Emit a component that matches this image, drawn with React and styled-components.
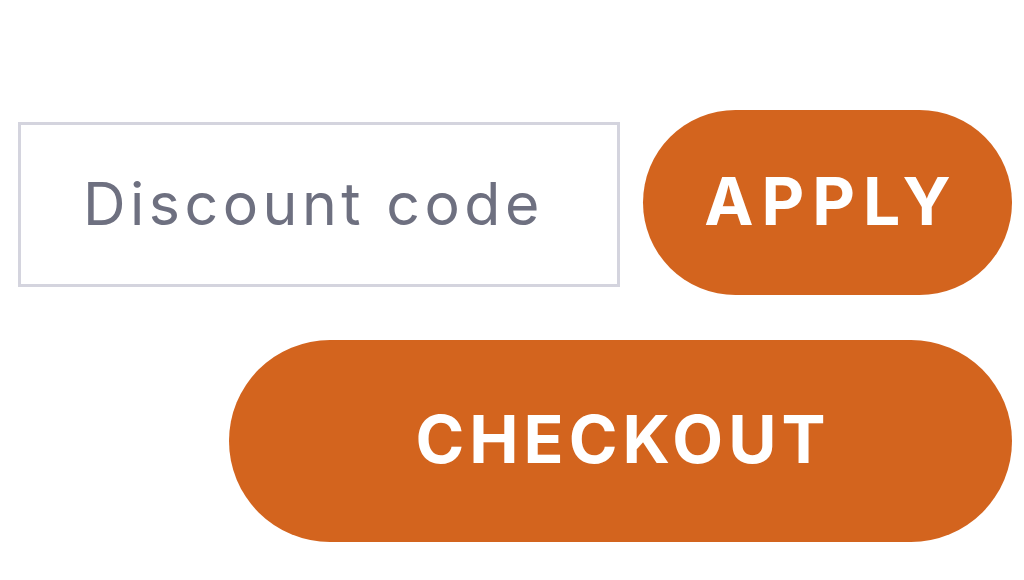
import styled, { createGlobalStyle } from "styled-components";

const GlobalStyle = createGlobalStyle`
  html, body {
    margin: 0;
    background: #ffffff;
  }
  body {
    font-family: "Inter", "Liberation Sans", sans-serif;
  }
`;

function App() {
  return (
    <>
      <GlobalStyle />
      <Cart>
        <DiscountRow>
          <CodeInput placeholder="Discount code" />
          <PillButton $w={369} $h={185} $spacing={8}>APPLY</PillButton>
        </DiscountRow>
        <PillButton $w={783} $h={202} $spacing={5}>CHECKOUT</PillButton>
      </Cart>
    </>
  );
}

export default App;

const Cart = styled.div`
  display: flex;
  flex-direction: column;
  align-items: flex-end;
  gap: 45px;
  width: 994px;
  padding: 110px 12px 0 18px;
`;

const DiscountRow = styled.div`
  display: flex;
  align-items: center;
  gap: 23px;
`;

const CodeInput = styled.input`
  box-sizing: border-box;
  width: 602px;
  height: 165px;
  margin-top: 4px;
  padding: 0 0 2px 62px;
  border: 3px solid #d4d4de;
  border-radius: 0;
  outline: none;
  font-family: "Inter", "Liberation Sans", sans-serif;
  font-size: 59px;
  letter-spacing: 4.5px;
  color: #6e7080;

  &::placeholder {
    color: #6e7080;
    opacity: 1;
  }
`;

const PillButton = styled.button`
  width: ${(p) => p.$w}px;
  height: ${(p) => p.$h}px;
  border: none;
  border-radius: 999px;
  background: #d3641e;
  color: #ffffff;
  font-family: "Inter", "Liberation Sans", sans-serif;
  font-weight: 700;
  font-size: 66px;
  letter-spacing: ${(p) => p.$spacing}px;
  padding: 0 0 4px ${(p) => p.$spacing}px;
  cursor: pointer;
`;
